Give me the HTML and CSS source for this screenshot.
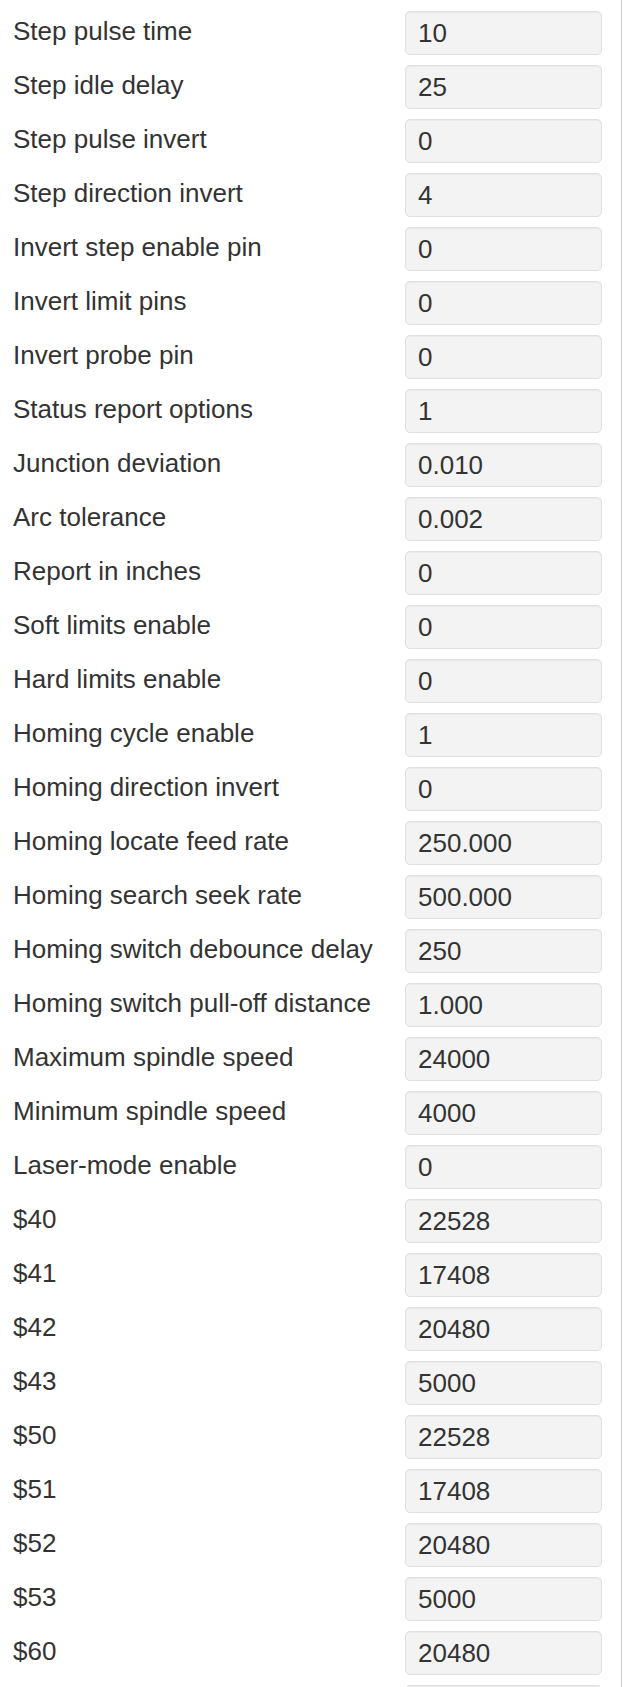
FILE: index.html
```html
<!DOCTYPE html>
<html lang="en">
  <head>
    <meta charset="UTF-8" />
    <meta name="viewport" content="width=device-width, initial-scale=1.0" />
    <title>Machine settings</title>
    <link rel="stylesheet" href="styles.css">
  </head>
  <body>
    <div class="panel">
      <form class="settings">
        <div class="row"><label>Step pulse time</label><input class="field" value="10" readonly></div>
        <div class="row"><label>Step idle delay</label><input class="field" value="25" readonly></div>
        <div class="row"><label>Step pulse invert</label><input class="field" value="0" readonly></div>
        <div class="row"><label>Step direction invert</label><input class="field" value="4" readonly></div>
        <div class="row"><label>Invert step enable pin</label><input class="field" value="0" readonly></div>
        <div class="row"><label>Invert limit pins</label><input class="field" value="0" readonly></div>
        <div class="row"><label>Invert probe pin</label><input class="field" value="0" readonly></div>
        <div class="row"><label>Status report options</label><input class="field" value="1" readonly></div>
        <div class="row"><label>Junction deviation</label><input class="field" value="0.010" readonly></div>
        <div class="row"><label>Arc tolerance</label><input class="field" value="0.002" readonly></div>
        <div class="row"><label>Report in inches</label><input class="field" value="0" readonly></div>
        <div class="row"><label>Soft limits enable</label><input class="field" value="0" readonly></div>
        <div class="row"><label>Hard limits enable</label><input class="field" value="0" readonly></div>
        <div class="row"><label>Homing cycle enable</label><input class="field" value="1" readonly></div>
        <div class="row"><label>Homing direction invert</label><input class="field" value="0" readonly></div>
        <div class="row"><label>Homing locate feed rate</label><input class="field" value="250.000" readonly></div>
        <div class="row"><label>Homing search seek rate</label><input class="field" value="500.000" readonly></div>
        <div class="row"><label>Homing switch debounce delay</label><input class="field" value="250" readonly></div>
        <div class="row"><label>Homing switch pull-off distance</label><input class="field" value="1.000" readonly></div>
        <div class="row"><label>Maximum spindle speed</label><input class="field" value="24000" readonly></div>
        <div class="row"><label>Minimum spindle speed</label><input class="field" value="4000" readonly></div>
        <div class="row"><label>Laser-mode enable</label><input class="field" value="0" readonly></div>
        <div class="row"><label>$40</label><input class="field" value="22528" readonly></div>
        <div class="row"><label>$41</label><input class="field" value="17408" readonly></div>
        <div class="row"><label>$42</label><input class="field" value="20480" readonly></div>
        <div class="row"><label>$43</label><input class="field" value="5000" readonly></div>
        <div class="row"><label>$50</label><input class="field" value="22528" readonly></div>
        <div class="row"><label>$51</label><input class="field" value="17408" readonly></div>
        <div class="row"><label>$52</label><input class="field" value="20480" readonly></div>
        <div class="row"><label>$53</label><input class="field" value="5000" readonly></div>
        <div class="row"><label>$60</label><input class="field" value="20480" readonly></div>
        <div class="row"><label></label><input class="field" value="" readonly></div>
      </form>
    </div>
  </body>
</html>
```

FILE: styles.css
```css
html,
body {
  margin: 0;
  padding: 0;
  background: #fff;
}

body {
  font-family: "Liberation Sans", Arial, sans-serif;
  color: #333;
  overflow: hidden;
}

.panel {
  width: 621px;
  min-height: 1700px;
  border-right: 1px solid #cfcfcf;
}

.settings {
  display: flex;
  flex-direction: column;
  gap: 10px;
  padding: 11px 0 0 13px;
}

.row {
  display: grid;
  grid-template-columns: 392px 197px;
  align-items: start;
}

.row label {
  font-size: 26px;
  padding-top: 5px;
  white-space: nowrap;
}

.field {
  box-sizing: border-box;
  height: 44px;
  width: 197px;
  margin: 0;
  padding: 0 12px;
  font: 26px "Liberation Sans", Arial, sans-serif;
  color: #333;
  background: #f3f3f3;
  border: 1px solid #e0e0e0;
  border-radius: 5px;
  box-shadow: inset 0 1px 1px rgba(0, 0, 0, 0.04);
  outline: none;
}
```
